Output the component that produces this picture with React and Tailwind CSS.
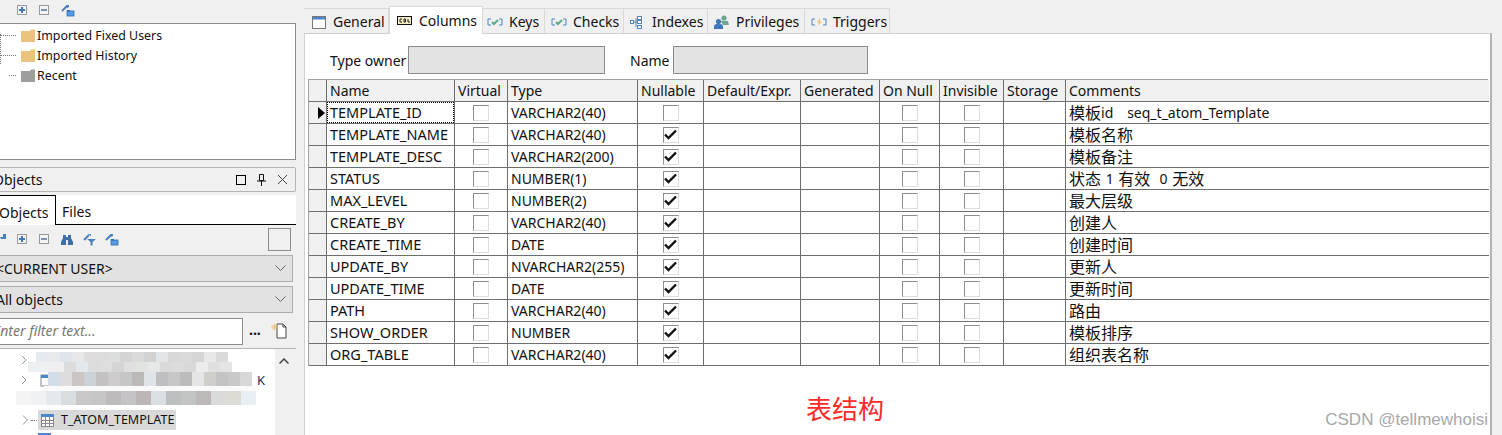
import React from "react";

const FONT = { fontFamily: '"Noto Sans","Noto Sans CJK SC",sans-serif' };

const Box = ({ minus }) => (
  <svg width="11" height="11" viewBox="0 0 11 11" className="shrink-0">
    <rect x="0.5" y="0.5" width="9" height="9" fill="#f4f4f4" stroke="#9a9a9a" />
    <rect x="2" y="4" width="6" height="2" fill={minus ? "#7a93b0" : "#3f78b8"} />
    {!minus && <rect x="4" y="2" width="2" height="6" fill="#3f78b8" />}
  </svg>
);

const Wrench = () => (
  <svg width="14" height="13" viewBox="0 0 14 13" className="shrink-0">
    <path d="M1 7 L6 2" stroke="#4a7fbd" strokeWidth="2" />
    <path d="M5 1 L8 1 L8 3 L6 4 Z" fill="#4a7fbd" />
    <rect x="6" y="7" width="7" height="5" fill="#5b9ae0" stroke="#2f6fb5" strokeWidth="0.8" />
    <rect x="6" y="6" width="3" height="1.5" fill="#2f6fb5" />
  </svg>
);

const Filter = () => (
  <svg width="13" height="13" viewBox="0 0 13 13" className="shrink-0">
    <path d="M1 7 L6 2" stroke="#4a7fbd" strokeWidth="2" />
    <path d="M5 1 L8 1 L8 3 Z" fill="#4a7fbd" />
    <path d="M4 6 L13 6 L9.5 9 L9.5 12.5 L7.5 12.5 L7.5 9 Z" fill="#4a7fbd" />
  </svg>
);

const Binoc = () => (
  <svg width="12" height="11" viewBox="0 0 12 11" className="shrink-0">
    <path d="M2 1h3v2h2V1h3v3l2 4v3H7V6H5v5H0V8l2-4z" fill="#3f6fa8" />
  </svg>
);

const Arrow = () => (
  <svg width="6" height="6" viewBox="0 0 6 6" className="shrink-0">
    <path d="M0 3 L3 3 L3 0 L6 0 L6 5 L1 5 Z" fill="#4a7fbd" />
  </svg>
);

const Folder = ({ color }) => (
  <svg width="14" height="13" viewBox="0 0 14 13" className="shrink-0">
    <path d="M0 2 H9 L10 0.5 H14 V13 H0 Z" fill={color} />
  </svg>
);

const TreeRow = ({ label, color, short }) => (
  <div className="flex items-center h-5">
    <div className={short ? "ml-[8px] w-[7px] border-t border-dotted border-[#777]" : "w-[15px] border-t border-dotted border-[#777]"} />
    <div className="w-[5px]" />
    <Folder color={color} />
    <span className="ml-[2px] mt-[2px] text-[12.4px] leading-5 text-[#111]">{label}</span>
  </div>
);

const TabIcon = ({ kind }) => {
  if (kind === "general")
    return (
      <svg width="14" height="13" viewBox="0 0 14 13" className="shrink-0">
        <rect x="0.5" y="0.5" width="13" height="12" fill="#fff" stroke="#777" />
        <rect x="1" y="1" width="12" height="2.5" fill="#4a86c8" />
      </svg>
    );
  if (kind === "col")
    return (
      <svg width="15" height="9" viewBox="0 0 15 9" className="shrink-0">
        <rect x="0.5" y="0.5" width="14" height="8" fill="#f5ecc4" stroke="#111" />
        <path d="M5 3H3v3h2M7 3h1.5v3H7zM11 3v3h2" fill="none" stroke="#111" strokeWidth="0.9" />
      </svg>
    );
  if (kind === "check")
    return (
      <svg width="16" height="9" viewBox="0 0 16 9" className="shrink-0">
        <path d="M4 1H1v6h3M12 1h3v6h-3" fill="none" stroke="#4a86c8" />
        <path d="M5 4l2 2 4-4" fill="none" stroke="#5fa88f" strokeWidth="2" />
      </svg>
    );
  if (kind === "index")
    return (
      <svg width="12" height="13" viewBox="0 0 12 13" className="shrink-0">
        <path d="M4 6h3M6 2v9" stroke="#4a86c8" fill="none" />
        <rect x="0.5" y="4.5" width="3" height="3" fill="#fff" stroke="#4a86c8" />
        <rect x="7.5" y="0.5" width="4" height="3" fill="#fff" stroke="#4a86c8" />
        <rect x="7.5" y="4.5" width="4" height="3" fill="#fff" stroke="#4a86c8" />
        <rect x="7.5" y="9.5" width="4" height="3" fill="#fff" stroke="#4a86c8" />
      </svg>
    );
  if (kind === "priv")
    return (
      <svg width="15" height="14" viewBox="0 0 15 14" className="shrink-0">
        <circle cx="10" cy="3" r="2.6" fill="#6ca591" />
        <path d="M7 6h7l1 4H9z" fill="#6ca591" />
        <circle cx="4.5" cy="6.5" r="2.6" fill="#3f78b8" />
        <path d="M0 14v-2.500q0-2.500 3-2.500h3q3 0 3 2.500V14z" fill="#3f78b8" />
      </svg>
    );
  return (
    <svg width="16" height="9" viewBox="0 0 16 9" className="shrink-0">
      <path d="M4 1H1v6h3M12 1h3v6h-3" fill="none" stroke="#4a86c8" />
      <path d="M9 0L6 4.500h2L7 8l4-4.500H9z" fill="#edc27a" />
    </svg>
  );
};

const Tab = ({ kind, label, w, active, gap, pad }) => (
  <div
    style={{ width: w }}
    className={
      active
        ? "h-[28px] -mb-px flex items-center bg-white border border-b-0 border-[#d9d9d9] pl-[7px] relative"
        : `h-[25px] flex items-center bg-[#f0f0f0] border border-b-0 border-l-0 border-[#d9d9d9] pt-[2px] ${pad}`
    }
  >
    <TabIcon kind={kind} />
    <span className={`text-[14px] leading-5 text-[#111] ${gap}`}>{label}</span>
  </div>
);

const cols = "grid-cols-[18px_128px_53px_130px_66px_97px_79px_60px_64px_62px_423px]";

const Check = ({ on }) => (
  <div className="w-[16px] h-[16px] border border-[#8e8e8e] border-r-[#dcdcdc] border-b-[#dcdcdc] bg-white flex items-center justify-center">
    {on && (
      <svg width="13" height="11" viewBox="0 0 13 11">
        <path d="M1 5.500 L4.500 9 L12 1.500" fill="none" stroke="#111" strokeWidth="2.400" />
      </svg>
    )}
  </div>
);

const rows = [
  ["TEMPLATE_ID", "VARCHAR2(40)", false, "模板id   seq_t_atom_Template"],
  ["TEMPLATE_NAME", "VARCHAR2(40)", true, "模板名称"],
  ["TEMPLATE_DESC", "VARCHAR2(200)", true, "模板备注"],
  ["STATUS", "NUMBER(1)", true, "状态 1 有效  0 无效"],
  ["MAX_LEVEL", "NUMBER(2)", true, "最大层级"],
  ["CREATE_BY", "VARCHAR2(40)", true, "创建人"],
  ["CREATE_TIME", "DATE", true, "创建时间"],
  ["UPDATE_BY", "NVARCHAR2(255)", true, "更新人"],
  ["UPDATE_TIME", "DATE", true, "更新时间"],
  ["PATH", "VARCHAR2(40)", true, "路由"],
  ["SHOW_ORDER", "NUMBER", true, "模板排序"],
  ["ORG_TABLE", "VARCHAR2(40)", true, "组织表名称"],
];

const headers = ["Name", "Virtual", "Type", "Nullable", "Default/Expr.", "Generated", "On Null", "Invisible", "Storage", "Comments"];

const Comment = ({ text }) =>
  text.split(/([\u4e00-\u9fff]+)/).map((part, i) =>
    /[\u4e00-\u9fff]/.test(part) ? (
      <span key={i} className="text-[16px]">{part}</span>
    ) : (
      <span key={i} className="[word-spacing:1px]">{part}</span>
    )
  );

const Cell = ({ children, center, last }) => (
  <div
    className={`h-[22px] border-b border-[#6e6e6e] ${last ? "" : "border-r"} flex items-center whitespace-pre overflow-hidden ${center ? "justify-center" : "pl-[3px]"}`}
  >
    {children}
  </div>
);

const Select = ({ label, mt }) => (
  <div className={`${mt} ml-[-8px] w-[301px] h-[27px] bg-[#e1e1e1] border border-[#adadad] flex items-center justify-between pl-[3px] pr-[6px]`}>
    <span className="text-[14px] text-[#111] leading-5">{label}</span>
    <svg width="11" height="7" viewBox="0 0 11 7">
      <path d="M0.500 0.500 L5.500 5.500 L10.500 0.500" fill="none" stroke="#666" />
    </svg>
  </div>
);

const line1 = ["#e4eaf0", "#e8ebee", "#dfe5ea", "#e8e8e8", "#dedcdc", "#dcdcdc", "#dcdddd", "#d4d4d4", "#dadada", "#d3d2d2", "#e2e6e9", "#d8d8d8", "#dadada", "#d6d6d6", "#e8e8e8", "#dadada"];
const line2 = ["#ecf0f3", "#eef0f2", "#efefef", "#dcdcdc", "#e2e8eb", "#dcdcdc", "#dedede", "#d5d5d5", "#e0e0e0", "#e2e4e2", "#e6e8e8", "#dadada", "#dcdcdc", "#d8d8d8", "#ececec", "#e0e0e0", "#e4e4e4"];
const line3 = ["#d3dde8", "#dedcdc", "#cbc6c4", "#ccd2d8", "#c3c1c2", "#cdcbcc", "#c7c6c6", "#bdb8b8", "#dfe4e8", "#bfbfc2", "#c7c7c7", "#bdbcbd", "#e6e5e5", "#cfcecb", "#c5c4c4", "#c9c9c9", "#d8d8d8"];
const line4 = ["#f4f4f4", "#f0f1f3", "#e4e9ee", "#d8dde0", "#c9c7c7", "#c6c6c6", "#bdbbbb", "#c5c3c5", "#bcb6b6", "#d9dfe2", "#bcbfc0", "#c1c4c3", "#bdb8b8", "#dadada", "#dddbd6", "#e8f0f4"];

export default function App() {
  return (
    <div style={FONT} className="w-[1502px] h-[435px] bg-[#f0f0f0] flex overflow-hidden">
      {/* left column */}
      <div className="w-[304px] shrink-0 overflow-hidden pl-0">
        <div className="h-[23px] flex items-center gap-[11px] pl-[17px] pb-[3px]">
          <Box />
          <Box minus />
          <Wrench />
        </div>
        <div className="relative ml-[-4px] w-[300px] h-[137px] bg-white border border-[#8c8c8c] pt-[1px] pl-[4px]">
          <div className="absolute left-[3px] top-[10px] h-[30px] border-l border-dotted border-[#777]" />
          <TreeRow label="Imported Fixed Users" color="#ebc37f" />
          <TreeRow label="Imported History" color="#ebc37f" />
          <TreeRow label="Recent" color="#9e9e9e" short />
        </div>

        <div className="mt-[7px] ml-[-4px] w-[300px] h-[25px] border border-[#b4b4b4] rounded-[2px] flex items-center justify-between pr-[7px] overflow-hidden">
          <span className="text-[14px] leading-5 text-[#111] -ml-[4px]">Objects</span>
          <div className="flex items-center gap-[11px]">
            <div className="w-[10px] h-[10px] border border-black" />
            <svg width="9" height="12" viewBox="0 0 9 12"><path d="M2.500 0.500h4v6h-4zM0 7h9M4.500 7v5" fill="none" stroke="#111" /></svg>
            <svg width="11" height="11" viewBox="0 0 11 11"><path d="M1 1L10 10M10 1L1 10" stroke="#444" /></svg>
          </div>
        </div>

        <div className="mt-[3px] w-[296px] h-[30px] bg-white border-b border-black flex">
          <div className="w-[56px] h-[30px] border-t border-r border-black bg-white text-[14px] leading-[33px] text-[#111] overflow-hidden">
            <span className="-ml-[1px]">Objects</span>
          </div>
          <span className="ml-[6px] text-[14px] leading-[33px] text-[#111]">Files</span>
        </div>

        <div className="h-[30px] flex items-center pl-[17px] pb-[2px] w-[296px] relative">
          <div className="absolute left-0 top-[9px]"><Arrow /></div>
          <Box />
          <div className="w-[11px]" />
          <Box minus />
          <div className="w-[11px]" />
          <Binoc />
          <div className="w-[10px]" />
          <Filter />
          <div className="w-[9px]" />
          <Wrench />
          <div className="ml-auto mr-[5px] w-[23px] h-[23px] border border-[#8c8c8c] bg-[#f0f0f0]" />
        </div>

        <Select label="<CURRENT USER>" mt="mt-0" />
        <Select label="All objects" mt="mt-[4px]" />

        <div className="mt-[5px] flex items-center w-[296px]">
          <div className="ml-[-8px] w-[251px] h-[27px] border border-[#8c8c8c] bg-white pl-0 text-[14px] leading-[24px] italic text-[#777] overflow-hidden whitespace-nowrap">
            Enter filter text...
          </div>
          <span className="ml-[6px] text-[14px] font-bold leading-none text-[#111] mb-[3px]">...</span>
          <svg width="16" height="16" viewBox="0 0 16 16" className="ml-[10px] mb-[2px]">
            <path d="M6 1h6l3 3v11H6z" fill="#fff" stroke="#444" />
            <path d="M12 1v3h3" fill="none" stroke="#444" />
            <path d="M3.500 0.500v7M0 4h7M1 1.500l5 5M6 1.500l-5 5" stroke="#f0c078" />
          </svg>
        </div>

        <div className="relative mt-[3px] w-[298px] ml-[-2px] h-[90px] bg-white border border-[#b4b4b4] border-r-0 flex overflow-hidden">
          <div className="flex-1 pl-[24px] pt-[61px]">
            <div className="flex items-center h-[20px] -ml-[1px]">
              <svg width="6" height="10" viewBox="0 0 6 10" className="shrink-0"><path d="M1 0.500L5.500 5L1 9.500" fill="none" stroke="#999" /></svg>
              <div className="w-[6px] ml-[3px] border-t border-dotted border-[#777]" />
              <div className="ml-[1px] h-[20px] w-[138px] bg-[#d9d9d9] flex items-center pl-[3px]">
                <svg width="13" height="13" viewBox="0 0 13 13" className="shrink-0">
                  <rect x="0.500" y="0.500" width="12" height="12" fill="#fff" stroke="#888" />
                  <rect x="0" y="0" width="13" height="3" fill="#4a86c8" />
                  <path d="M4.500 3v10M8.500 3v10M0 6.500h13M0 9.500h13" stroke="#888" />
                </svg>
                <span className="ml-[7px] text-[12.500px] leading-5 text-[#111] whitespace-nowrap">T_ATOM_TEMPLATE</span>
              </div>
            </div>
            <div className="mt-[3px] ml-[15px] w-[13px] h-[3px] bg-[#4a86c8]" />
          </div>
          <div className="w-[21px] h-full bg-[#f0f0f0] shrink-0 flex justify-center pt-[9px] pr-[3px] z-10">
            <svg width="10" height="6" viewBox="0 0 10 6"><path d="M0.500 5.500L5 1L9.500 5.500" fill="none" stroke="#444" strokeWidth="1.500" /></svg>
          </div>
          {/* blurred mosaic laid over the hidden tree rows */}
          <svg width="272" height="58" viewBox="0 0 272 58" className="absolute left-0 top-0">
            <path d="M23 7l4 4-4 4M23 27l4 4-4 4" fill="none" stroke="#999" />
            <rect x="42" y="26" width="11" height="11" fill="#fff" stroke="#888" />
            <rect x="42" y="26" width="11" height="3" fill="#4a86c8" />
            <text x="258" y="36" fontSize="13" fill="#2a2a60">K</text>
            <g style={{ filter: "blur(0.6px)" }}>
              {line1.map((c, i) => <rect key={i} x={37 + i * 12} y={3} width="12" height="10" fill={c} />)}
              {line2.map((c, i) => <rect key={i} x={29 + i * 12} y={13} width="12" height="10" fill={c} />)}
              {line3.map((c, i) => <rect key={i} x={49 + i * 12} y={23} width="12" height="15" fill={c} />)}
              <rect x="45" y="37" width="215" height="5" fill="#fafafa" />
              {line4.map((c, i) => <rect key={i} x={17 + i * 15} y={42} width="15" height="14" fill={c} />)}
            </g>
          </svg>
        </div>
      </div>

      {/* right column */}
      <div className="flex-1 flex flex-col min-w-0 mr-[10px]">
        <div className="h-[33px] flex items-end pl-0 shrink-0 relative z-10">
          <Tab kind="general" label="General" w={85} gap="ml-[7px]" pad="pl-[8px]" />
          <Tab kind="col" label="Columns" w={94} active gap="ml-[7px]" />
          <Tab kind="check" label="Keys" w={62} gap="ml-[6px]" pad="pl-[4px]" />
          <Tab kind="check" label="Checks" w={79} gap="ml-[6px]" pad="pl-[6px]" />
          <Tab kind="index" label="Indexes" w={84} gap="ml-[10px]" pad="pl-[6px]" />
          <Tab kind="priv" label="Privileges" w={97} gap="ml-[7px]" pad="pl-[6px]" />
          <Tab kind="trig" label="Triggers" w={85} gap="ml-[6px]" pad="pl-[6px]" />
        </div>
        <div className="flex-1 bg-white border-l border-r-2 border-t border-[#d0d0d0] border-r-[#b4b4b4] min-h-0 relative">
          <div className="h-[45px] flex items-center pt-[7px] text-[14px] text-[#111] whitespace-nowrap">
            <span className="ml-[25px] w-[78px]">Type owner</span>
            <div className="w-[197px] h-[28px] bg-[#e3e3e3] border border-[#8c8c8c]" />
            <span className="ml-[25px] w-[43px]">Name</span>
            <div className="w-[195px] h-[28px] bg-[#e3e3e3] border border-[#8c8c8c]" />
          </div>

          <div className={`ml-[3px] w-[1180px] grid ${cols} text-[14px] text-[#111] border-l border-t border-[#a0a0a0]`}>
            <div className="h-[22px] bg-[#f0f0f0] border-b border-r border-[#6e6e6e]" />
            {headers.map((h, i) => (
              <div key={h} className={`h-[22px] bg-[#f0f0f0] border-b border-[#6e6e6e] ${i === 9 ? "" : "border-r"} pl-[3px] flex items-center whitespace-nowrap overflow-hidden`}>
                {h}
              </div>
            ))}
            {rows.map((r, idx) => (
              <React.Fragment key={r[0]}>
                <div className="h-[22px] bg-[#f0f0f0] border-b border-r border-[#6e6e6e] flex items-center justify-end pr-[1px]">
                  {idx === 0 && <svg width="7" height="12" viewBox="0 0 7 12"><path d="M0 0L7 6L0 12Z" fill="#000" /></svg>}
                </div>
                <Cell>
                  {idx === 0 ? (
                    <div className="h-full w-[calc(100%+3px)] shrink-0 -ml-[3px] pl-[2px] border border-dotted border-black flex items-center text-[14.500px]">{r[0]}</div>
                  ) : <span className="text-[14.500px]">{r[0]}</span>}
                </Cell>
                <Cell center><Check /></Cell>
                <Cell>{r[1]}</Cell>
                <Cell center><Check on={r[2]} /></Cell>
                <Cell />
                <Cell />
                <Cell center><Check /></Cell>
                <Cell center><Check /></Cell>
                <Cell />
                <Cell last><Comment text={r[3]} /></Cell>
              </React.Fragment>
            ))}
          </div>

          <div className="mt-[25px] ml-[501px] text-[26px] leading-[36px] text-[#ff2a2a]">表结构</div>
          <div className="absolute right-[2px] bottom-[5px] text-[17px] leading-5 text-[#a8a8a8] whitespace-nowrap" style={{ fontFamily: '"Liberation Sans",sans-serif' }}>
            CSDN @tellmewhoisi
          </div>
        </div>
      </div>
    </div>
  );
}
